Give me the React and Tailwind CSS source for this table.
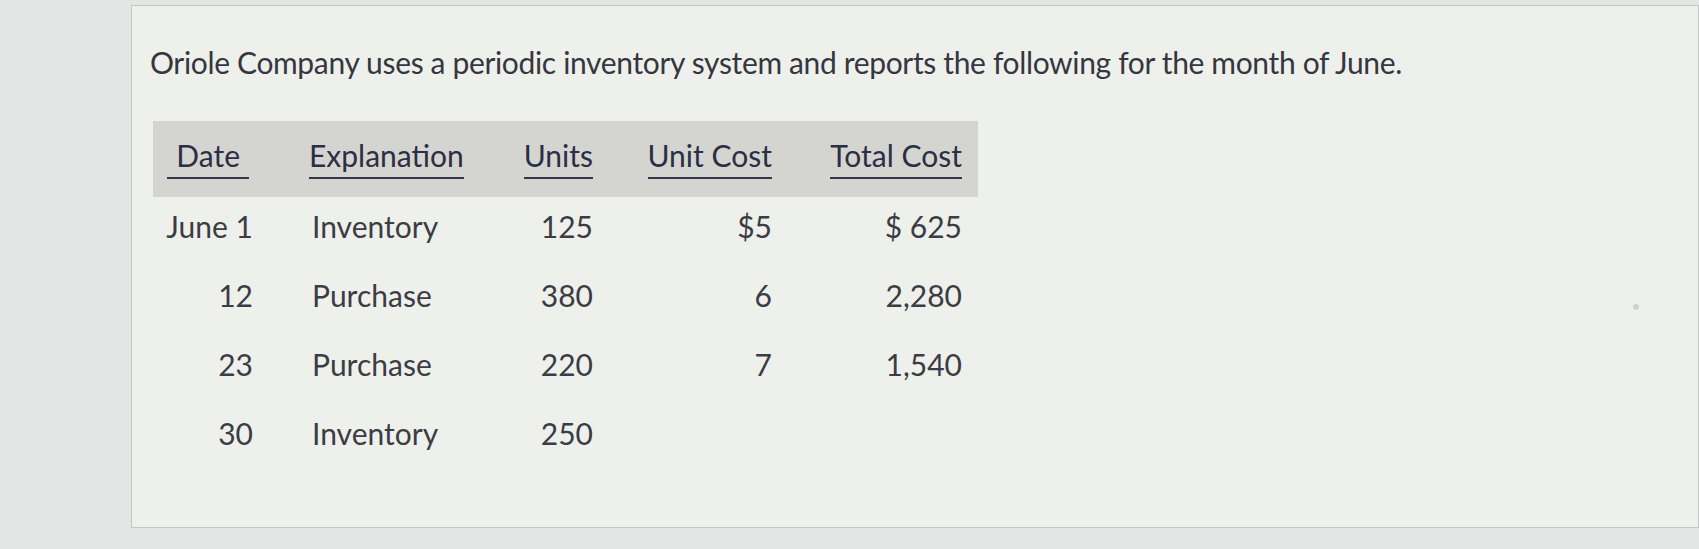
import React from "react";

const rows = [
  { date: "June 1", explanation: "Inventory", units: "125", unitCost: "$5", totalCost: "$ 625" },
  { date: "12", explanation: "Purchase", units: "380", unitCost: "6", totalCost: "2,280" },
  { date: "23", explanation: "Purchase", units: "220", unitCost: "7", totalCost: "1,540" },
  { date: "30", explanation: "Inventory", units: "250", unitCost: "", totalCost: "" },
];

const App = () => {
  return (
    <div
      className="relative w-full h-[549px] overflow-hidden bg-[#e3e6e4] pl-[131px] pt-[5px]"
      style={{ fontFamily: "Lato, 'Open Sans', sans-serif" }}
    >
      <div className="h-[523px] border border-[#c3c6c4] bg-[#eef0ec] pl-[18px] pt-[38px]">
        <p className="text-[30px] leading-[36px] tracking-[-0.35px] text-[#36363f]">
          Oriole Company uses a periodic inventory system and reports the following for the month of June.
        </p>

        <div className="mt-[41px] w-[825px] ml-[3px]">
          <div className="grid grid-cols-[100px_219px_121px_179px_190px] pr-[16px] bg-[#d4d5d1] h-[76px] pt-[16px] text-[30px] leading-[36px] text-[#2c2e44]">
            <div className="flex items-start justify-end pr-[4px]">
              <span className="border-b-2 border-[#34374c] px-[9px] pb-[4px]">Date</span>
            </div>
            <div className="flex items-start pl-[56px]">
              <span className="border-b-2 border-[#34374c] pb-[4px]">Explanation</span>
            </div>
            <div className="flex items-start justify-end">
              <span className="border-b-2 border-[#34374c] pb-[4px]">Units</span>
            </div>
            <div className="flex items-start justify-end">
              <span className="border-b-2 border-[#34374c] pb-[4px]">Unit Cost</span>
            </div>
            <div className="flex items-start justify-end">
              <span className="border-b-2 border-[#34374c] pb-[4px]">Total Cost</span>
            </div>
          </div>

          {rows.map((row, idx) => (
            <div
              key={idx}
              className="grid grid-cols-[100px_219px_121px_179px_190px] pr-[16px] h-[69px] text-[30px] leading-[59px] text-[#3c3c44]"
            >
              <div className="text-right">{row.date}</div>
              <div className="pl-[59px]">{row.explanation}</div>
              <div className="text-right">{row.units}</div>
              <div className="text-right">{row.unitCost}</div>
              <div className="text-right">{row.totalCost}</div>
            </div>
          ))}
        </div>
      </div>

      <div className="absolute left-[1633px] top-[304px] w-[6px] h-[6px] rounded-full bg-[#cfd1d0]" />
    </div>
  );
};

export default App;
